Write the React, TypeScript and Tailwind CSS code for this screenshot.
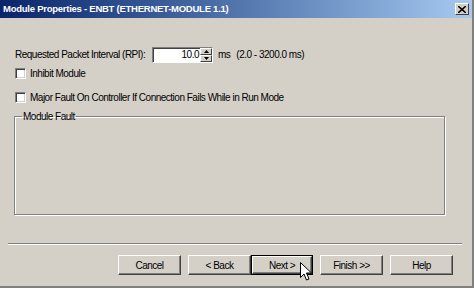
import React from "react";

function Checkbox() {
  return (
    <div className="w-[11px] h-[11px] bg-white border border-t-[#808080] border-l-[#808080] border-r-white border-b-white shadow-[inset_1px_1px_0_#404040,inset_-1px_-1px_0_#d4d0c8] shrink-0" />
  );
}

function Button({ label, width, isDefault }: { label: string; width: string; isDefault?: boolean }) {
  return (
    <div className={`${width} h-[20px] ${isDefault ? "border border-black" : ""}`}>
      <div className="h-full w-full flex items-center justify-center border border-t-white border-l-white border-r-[#404040] border-b-[#404040] shadow-[inset_-1px_-1px_0_#808080]">
        {label}
      </div>
    </div>
  );
}

function Spinner() {
  return (
    <div className="w-[12px] h-full flex flex-col">
      <div className="flex-1 flex items-center justify-center bg-[#d4d0c8] border border-t-white border-l-white border-r-[#404040] border-b-[#404040]">
        <svg width="5" height="3" viewBox="0 0 5 3">
          <path d="M2.5 0 L5 3 L0 3 Z" fill="#000" />
        </svg>
      </div>
      <div className="flex-1 flex items-center justify-center bg-[#d4d0c8] border border-t-white border-l-white border-r-[#404040] border-b-[#404040]">
        <svg width="5" height="3" viewBox="0 0 5 3">
          <path d="M0 0 L5 0 L2.5 3 Z" fill="#000" />
        </svg>
      </div>
    </div>
  );
}

export default function App() {
  return (
    <div className="w-[474px] h-[288px] bg-[#d4d0c8] overflow-hidden relative flex flex-col border-r-2 border-b-2 border-[#808080] font-['Liberation_Sans',Arial,sans-serif] text-[10px] tracking-[-0.5px] text-black whitespace-nowrap">
      {/* Title bar */}
      <div className="h-[18px] flex items-center justify-between pl-[3px] pr-[3px] bg-linear-to-r from-[#0a246a] to-[#a6caf0]">
        <span className="text-white font-bold text-[9.5px] tracking-[-0.25px]">
          Module Properties - ENBT (ETHERNET-MODULE 1.1)
        </span>
        <div className="w-[14px] h-[12px] bg-[#d4d0c8] border border-t-white border-l-white border-r-[#404040] border-b-[#404040] flex items-center justify-center">
          <svg width="8" height="7" viewBox="0 0 8 7">
            <path d="M0 0 L8 7 M8 0 L0 7" stroke="#000" strokeWidth="1.6" />
          </svg>
        </div>
      </div>

      {/* Body */}
      <div className="flex flex-col pl-[15px] mt-[29px]">
        <div className="h-[15px] flex items-center">
          <span className="w-[137px]">Requested Packet Interval (RPI):</span>
          <div className="w-[61px] h-[16px] bg-white border border-t-[#808080] border-l-[#808080] border-r-white border-b-white shadow-[inset_1px_1px_0_#404040] flex items-stretch">
            <span className="flex-1 text-right pr-[1px] leading-[14px]">10.0</span>
            <Spinner />
          </div>
          <span className="ml-[5px]">ms</span>
          <span className="ml-[6px]">(2.0 - 3200.0 ms)</span>
        </div>

        <div className="mt-[6px] h-[11px] flex items-center gap-[4px]">
          <Checkbox />
          <span>Inhibit Module</span>
        </div>

        <div className="mt-[13px] h-[11px] flex items-center gap-[4px]">
          <Checkbox />
          <span>Major Fault On Controller If Connection Fails While in Run Mode</span>
        </div>

        <fieldset className="mt-[6px] -ml-[1px] w-[431px] h-[106px] border border-[#808080] shadow-[1px_1px_0_white,inset_1px_1px_0_white] px-[6px]">
          <legend className="px-[1px] ml-[1px]">Module Fault</legend>
        </fieldset>

        <div className="mt-[28px] -ml-[7px] w-[454px] h-[2px] border-t border-t-[#808080] border-b border-b-white" />

        <div className="mt-[10px] ml-[103px] flex">
          <Button label="Cancel" width="w-[63px]" />
          <div className="w-[7px]" />
          <Button label="< Back" width="w-[63px]" />
          <Button label="Next >" width="w-[62px]" isDefault />
          <div className="w-[7px]" />
          <Button label="Finish >>" width="w-[63px]" />
          <div className="w-[7px]" />
          <Button label="Help" width="w-[63px]" />
        </div>
      </div>

      {/* Mouse cursor */}
      <svg className="absolute left-[300px] top-[262px]" width="12" height="19" viewBox="0 0 12 19">
        <path d="M0.5 0.5 L0.5 15.5 L4 12 L6.5 18 L9 17 L6.5 11 L11.5 11 Z" fill="#fff" stroke="#000" strokeWidth="1" />
      </svg>
    </div>
  );
}
